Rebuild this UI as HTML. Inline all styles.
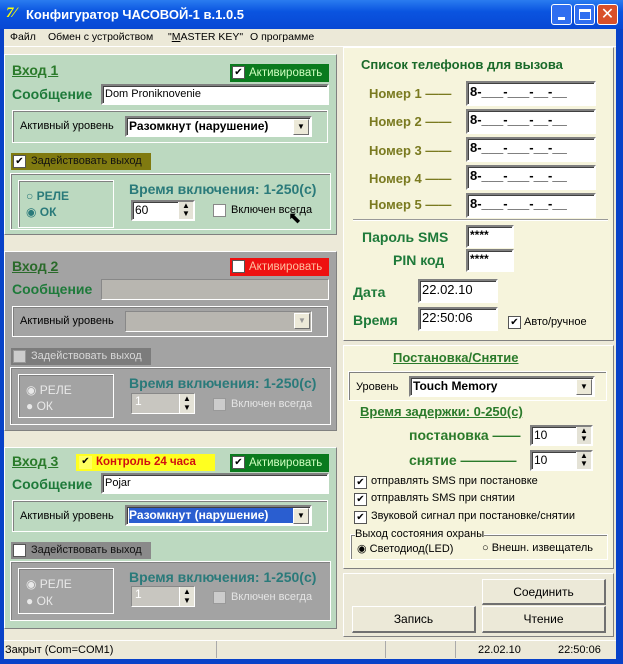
<!DOCTYPE html>
<html><head><meta charset="utf-8"><style>
*{box-sizing:border-box;margin:0;padding:0}
body{width:623px;height:664px;overflow:hidden;background:#0842c8;font-family:"Liberation Sans","DejaVu Sans",sans-serif;font-size:11px;position:relative;white-space:nowrap}
.a{position:absolute}
.title{left:0;top:0;width:623px;height:29px;background:linear-gradient(#2a7cf0,#0a54e0 40%,#0848d4);color:#fff;font-weight:bold;font-size:13px}
.win{left:4px;top:29px;width:612px;height:630px;background:#ece9d8}
.grn{background:#bcd9c0}
.gry{background:#a3a3a3}
.bevel{border:1px solid #fff;border-right-color:#808080;border-bottom-color:#808080}
.grp{border:1px solid #fff;box-shadow:inset 1px 1px 0 #808080}
.inp{background:#fff;border:2px solid;border-color:#808080 #fff #fff #808080;box-shadow:inset 1px 1px 0 #404040;font-size:12px;padding-left:2px;line-height:17px}
.h{color:#1e7a3a;font-weight:bold;font-size:14px}
.hu{color:#2a7a2a;font-weight:bold;font-size:14px;text-decoration:underline}
.cb{width:13px;height:13px;background:#fff;border:1px solid #555;font-size:10px;line-height:11px;text-align:center;color:#000;font-weight:bold}
.btn{background:#ece9d8;border:1px solid #fff;border-right:2px solid #707070;border-bottom:2px solid #707070;text-align:center;font-size:12px}
.spin{width:15px;background:#e4e2d6;border-left:1px solid #fff}
.teal{color:#2a7a7a;font-weight:bold;font-size:14px}
.nom{color:#7a7a20;font-weight:bold;font-size:13px}
.dd{width:16px;height:16px;background:#ece9d8;border:1px solid #fff;border-right-color:#707070;border-bottom-color:#707070;font-size:8px;text-align:center;line-height:14px}
</style></head><body>
<div class="a title"><span class="a" style="left:6px;top:5px;color:#ff0;font-style:italic;font-family:'Liberation Serif',serif;font-size:15px">7⁄</span><span class="a" style="left:26px;top:7px">Конфигуратор ЧАСОВОЙ-1 в.1.0.5</span>
<div class="a" style="left:551px;top:4px;width:21px;height:21px;border:1px solid #fff;border-radius:3px;background:#2f6ef0"><div class="a" style="left:6px;top:12px;width:7px;height:3px;background:#fff"></div></div>
<div class="a" style="left:574px;top:4px;width:21px;height:21px;border:1px solid #fff;border-radius:3px;background:#2f6ef0"><div class="a" style="left:4px;top:4px;width:12px;height:11px;border:1px solid #fff;border-top-width:3px"></div></div>
<div class="a" style="left:597px;top:4px;width:21px;height:21px;border:1px solid #fff;border-radius:3px;background:#d9502a;color:#fff;font-size:16px;text-align:center;line-height:19px">✕</div></div>
<div class="a win">
<div class="a" style="left:6px;top:2px;font-size:10.5px">Файл</div>
<div class="a" style="left:44px;top:2px;font-size:10.5px">Обмен с устройством</div>
<div class="a" style="left:164px;top:2px;font-size:10.5px">"<u>M</u>ASTER KEY"</div>
<div class="a" style="left:246px;top:2px;font-size:10.5px">О программе</div>
<div class="a" style="left:0;top:17px;width:612px;border-top:1px solid #fff"></div>
</div>

<!-- Вход 1 -->
<div class="a grn bevel" style="left:4px;top:54px;width:333px;height:181px"></div>
<div class="a hu" style="left:12px;top:62px">Вход 1</div>
<div class="a" style="left:230px;top:64px;width:99px;height:18px;background:#0a7a1e;color:#d0ffc0;font-size:11.5px;padding-left:19px;line-height:18px">Активировать<div class="a cb" style="left:2px;top:2px">✔</div></div>
<div class="a h" style="left:12px;top:86px">Сообщение</div>
<div class="a inp" style="left:101px;top:84px;width:228px;height:21px;font-size:11px">Dom Proniknovenie</div>
<div class="a grp" style="left:12px;top:110px;width:316px;height:33px"></div>
<div class="a" style="left:20px;top:120px;font-size:11px">Активный уровень</div>
<div class="a inp" style="left:125px;top:116px;width:187px;height:21px;font-weight:bold;font-size:12px">Разомкнут (нарушение)<div class="a dd" style="right:1px;top:1px">▼</div></div>
<div class="a" style="left:11px;top:153px;width:140px;height:17px;background:#807a10;font-size:11px;padding-left:20px;line-height:17px;color:#111">Задействовать выход<div class="a cb" style="left:2px;top:2px">✔</div></div>
<div class="a grp" style="left:10px;top:173px;width:321px;height:57px"></div>
<div class="a grp" style="left:18px;top:180px;width:96px;height:48px"></div>
<div class="a" style="left:26px;top:189px;color:#2a7a7a;font-weight:bold;font-size:12px">○ РЕЛЕ</div>
<div class="a" style="left:26px;top:205px;color:#2a7a7a;font-weight:bold;font-size:12px">◉ ОК</div>
<div class="a teal" style="left:129px;top:181px">Время включения: 1-250(с)</div>
<div class="a inp" style="left:131px;top:200px;width:64px;height:21px">60<div class="a spin" style="right:0;top:0;height:17px;font-size:8px;line-height:8px;text-align:center">▲<br>▼</div></div>
<div class="a cb" style="left:213px;top:204px;border-color:#888"></div>
<div class="a" style="left:231px;top:204px;font-size:11px">Включен всегда</div>
<div class="a" style="left:288px;top:208px;font-size:16px;color:#000">⬉</div>

<!-- Вход 2 -->
<div class="a gry bevel" style="left:4px;top:251px;width:333px;height:180px"></div>
<div class="a hu" style="left:12px;top:258px;color:#2a6a2a">Вход 2</div>
<div class="a" style="left:230px;top:258px;width:99px;height:18px;background:#ee1010;color:#ffc0a0;font-size:11.5px;padding-left:19px;line-height:18px">Активировать<div class="a cb" style="left:2px;top:2px"></div></div>
<div class="a h" style="left:12px;top:281px">Сообщение</div>
<div class="a" style="left:101px;top:279px;width:228px;height:21px;background:#b8b6b0;border:1px solid #fff;border-top-color:#888;border-left-color:#888"></div>
<div class="a grp" style="left:12px;top:306px;width:316px;height:31px"></div>
<div class="a" style="left:20px;top:315px;font-size:11px">Активный уровень</div>
<div class="a" style="left:125px;top:311px;width:187px;height:21px;background:#b8b6b0;border:1px solid #fff;border-top-color:#888;border-left-color:#888"><div class="a dd" style="right:1px;top:1px;color:#999">▼</div></div>
<div class="a" style="left:11px;top:348px;width:140px;height:17px;background:#7c7c7c;font-size:11px;padding-left:20px;line-height:17px;color:#d8d8d8">Задействовать выход<div class="a cb" style="left:2px;top:2px;background:#ccc;border-color:#999"></div></div>
<div class="a grp" style="left:10px;top:367px;width:321px;height:58px"></div>
<div class="a grp" style="left:18px;top:374px;width:96px;height:44px"></div>
<div class="a" style="left:26px;top:383px;color:#e8e8e8;font-size:12px">◉ РЕЛЕ</div>
<div class="a" style="left:26px;top:399px;color:#e8e8e8;font-size:12px">● ОК</div>
<div class="a teal" style="left:129px;top:375px">Время включения: 1-250(с)</div>
<div class="a" style="left:131px;top:393px;width:64px;height:21px;background:#c8c6c0;border:1px solid #fff;border-top-color:#888;border-left-color:#888;color:#fff;padding-left:3px;font-size:12px">1<div class="a spin" style="right:0;top:0;height:19px;font-size:8px;line-height:9px;text-align:center;color:#000">▲<br>▼</div></div>
<div class="a cb" style="left:213px;top:398px;background:#ccc;border-color:#999"></div>
<div class="a" style="left:231px;top:398px;font-size:11px;color:#e4e4e4">Включен всегда</div>

<!-- Вход 3 -->
<div class="a grn bevel" style="left:4px;top:447px;width:333px;height:182px"></div>
<div class="a hu" style="left:12px;top:453px">Вход 3</div>
<div class="a" style="left:76px;top:454px;width:139px;height:17px;background:#ffff20;color:#d01010;font-weight:bold;font-size:11.5px;padding-left:20px;line-height:17px">Контроль 24 часа<div class="a cb" style="left:3px;top:2px;background:#ffff60;border:none">✔</div></div>
<div class="a" style="left:230px;top:454px;width:99px;height:18px;background:#0a7a1e;color:#d0ffc0;font-size:11.5px;padding-left:19px;line-height:18px">Активировать<div class="a cb" style="left:2px;top:2px">✔</div></div>
<div class="a h" style="left:12px;top:476px">Сообщение</div>
<div class="a inp" style="left:101px;top:473px;width:228px;height:21px;font-size:11px">Pojar</div>
<div class="a grp" style="left:12px;top:500px;width:316px;height:32px"></div>
<div class="a" style="left:20px;top:510px;font-size:11px">Активный уровень</div>
<div class="a inp" style="left:125px;top:505px;width:187px;height:21px;font-size:12px"><span class="a" style="left:2px;top:1px;width:164px;height:15px;background:#2a5ed0;color:#fff;font-weight:bold;line-height:15px">Разомкнут (нарушение)</span><div class="a dd" style="right:1px;top:1px">▼</div></div>
<div class="a" style="left:11px;top:542px;width:140px;height:17px;background:#8a8a8a;font-size:11px;padding-left:20px;line-height:17px;color:#111">Задействовать выход<div class="a cb" style="left:2px;top:2px"></div></div>
<div class="a gry grp" style="left:10px;top:561px;width:321px;height:60px"></div>
<div class="a grp" style="left:18px;top:568px;width:96px;height:46px"></div>
<div class="a" style="left:26px;top:577px;color:#e8e8e8;font-size:12px">◉ РЕЛЕ</div>
<div class="a" style="left:26px;top:594px;color:#e8e8e8;font-size:12px">● ОК</div>
<div class="a teal" style="left:129px;top:569px">Время включения: 1-250(с)</div>
<div class="a" style="left:131px;top:586px;width:64px;height:21px;background:#c8c6c0;border:1px solid #fff;border-top-color:#888;border-left-color:#888;color:#fff;padding-left:3px;font-size:12px">1<div class="a spin" style="right:0;top:0;height:19px;font-size:8px;line-height:9px;text-align:center;color:#000">▲<br>▼</div></div>
<div class="a cb" style="left:213px;top:591px;background:#ccc;border-color:#999"></div>
<div class="a" style="left:231px;top:591px;font-size:11px;color:#e4e4e4">Включен всегда</div>

<!-- Right panel 1 -->
<div class="a bevel" style="left:343px;top:47px;width:271px;height:294px;background:#f6f4dc"></div>
<div class="a" style="left:361px;top:57px;color:#1a6a2a;font-weight:bold;font-size:13px">Список телефонов для вызова</div>
<div class="a nom" style="left:369px;top:86px">Номер 1 ——</div>
<div class="a nom" style="left:369px;top:114px">Номер 2 ——</div>
<div class="a nom" style="left:369px;top:143px">Номер 3 ——</div>
<div class="a nom" style="left:369px;top:171px">Номер 4 ——</div>
<div class="a nom" style="left:369px;top:197px">Номер 5 ——</div>
<div class="a inp" style="left:466px;top:81px;width:130px;height:25px;font-weight:bold;font-size:13px">8-___-___-__-__</div>
<div class="a inp" style="left:466px;top:109px;width:130px;height:25px;font-weight:bold;font-size:13px">8-___-___-__-__</div>
<div class="a inp" style="left:466px;top:137px;width:130px;height:25px;font-weight:bold;font-size:13px">8-___-___-__-__</div>
<div class="a inp" style="left:466px;top:165px;width:130px;height:25px;font-weight:bold;font-size:13px">8-___-___-__-__</div>
<div class="a inp" style="left:466px;top:193px;width:130px;height:25px;font-weight:bold;font-size:13px">8-___-___-__-__</div>
<div class="a" style="left:353px;top:219px;width:255px;border-top:1px solid #999;border-bottom:1px solid #fff"></div>
<div class="a h" style="left:362px;top:229px">Пароль SMS</div>
<div class="a h" style="left:393px;top:252px">PIN код</div>
<div class="a inp" style="left:466px;top:225px;width:48px;height:23px;font-weight:bold">****</div>
<div class="a inp" style="left:466px;top:249px;width:48px;height:23px;font-weight:bold">****</div>
<div class="a h" style="left:353px;top:284px">Дата</div>
<div class="a h" style="left:353px;top:312px">Время</div>
<div class="a inp" style="left:418px;top:279px;width:80px;height:24px;font-size:13px">22.02.10</div>
<div class="a inp" style="left:418px;top:307px;width:80px;height:24px;font-size:13px">22:50:06</div>
<div class="a cb" style="left:508px;top:316px">✔</div>
<div class="a" style="left:524px;top:316px;font-size:11px">Авто/ручное</div>

<!-- Right panel 2 -->
<div class="a bevel" style="left:343px;top:345px;width:271px;height:224px;background:#f6f4dc"></div>
<div class="a" style="left:393px;top:350px;color:#2a7a2a;font-weight:bold;font-size:13px;text-decoration:underline">Постановка/Снятие</div>
<div class="a grp" style="left:348px;top:371px;width:259px;height:30px"></div>
<div class="a" style="left:356px;top:381px;font-size:11px">Уровень</div>
<div class="a inp" style="left:409px;top:376px;width:186px;height:21px;font-weight:bold;font-size:12px">Touch Memory<div class="a dd" style="right:1px;top:1px">▼</div></div>
<div class="a hu" style="left:360px;top:404px;font-size:13px">Время задержки: 0-250(с)</div>
<div class="a" style="left:409px;top:427px;color:#2a7a2a;font-weight:bold;font-size:14px">постановка ——</div>
<div class="a" style="left:409px;top:452px;color:#2a7a2a;font-weight:bold;font-size:14px">снятие ————</div>
<div class="a inp" style="left:530px;top:425px;width:63px;height:21px">10<div class="a spin" style="right:0;top:0;height:17px;font-size:8px;line-height:8px;text-align:center">▲<br>▼</div></div>
<div class="a inp" style="left:530px;top:450px;width:63px;height:21px">10<div class="a spin" style="right:0;top:0;height:17px;font-size:8px;line-height:8px;text-align:center">▲<br>▼</div></div>
<div class="a cb" style="left:354px;top:476px">✔</div><div class="a" style="left:371px;top:475px">отправлять SMS при постановке</div>
<div class="a cb" style="left:354px;top:493px">✔</div><div class="a" style="left:371px;top:492px">отправлять SMS при снятии</div>
<div class="a cb" style="left:354px;top:511px">✔</div><div class="a" style="left:371px;top:510px">Звуковой сигнал при постановке/снятии</div>
<div class="a grp" style="left:350px;top:534px;width:258px;height:26px"></div>
<div class="a" style="left:355px;top:528px;background:#f6f4dc;font-size:11px">Выход состояния охраны</div>
<div class="a" style="left:357px;top:542px;font-size:11px">◉ Светодиод(LED)</div>
<div class="a" style="left:482px;top:542px;font-size:11px">○ Внешн. извещатель</div>

<!-- buttons -->
<div class="a bevel" style="left:343px;top:573px;width:271px;height:64px"></div>
<div class="a btn" style="left:482px;top:579px;width:124px;height:26px;line-height:24px">Соединить</div>
<div class="a btn" style="left:352px;top:606px;width:124px;height:27px;line-height:25px">Запись</div>
<div class="a btn" style="left:482px;top:606px;width:124px;height:27px;line-height:25px">Чтение</div>

<!-- status -->
<div class="a" style="left:4px;top:640px;width:612px;height:19px;background:#ece9d8;border-top:1px solid #fff"></div>
<div class="a" style="left:5px;top:644px;font-size:11px">Закрыт (Com=COM1)</div>
<div class="a" style="left:216px;top:641px;height:17px;border-left:1px solid #aaa"></div>
<div class="a" style="left:385px;top:641px;height:17px;border-left:1px solid #aaa"></div>
<div class="a" style="left:455px;top:641px;height:17px;border-left:1px solid #aaa"></div>
<div class="a" style="left:478px;top:644px;font-size:11px">22.02.10</div>
<div class="a" style="left:558px;top:644px;font-size:11px">22:50:06</div>
</body></html>
